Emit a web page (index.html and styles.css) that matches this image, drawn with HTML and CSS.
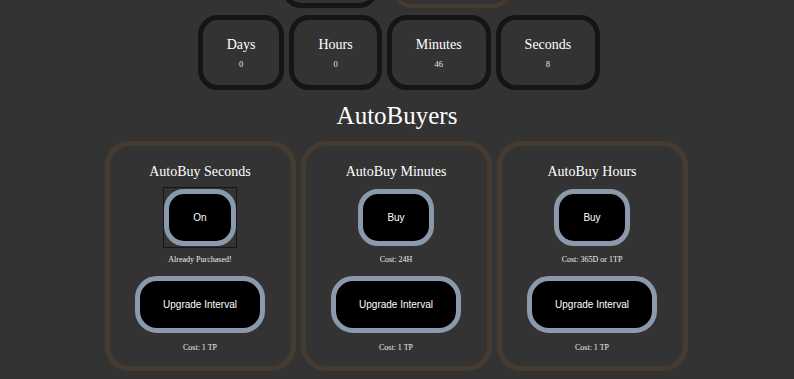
FILE: index.html
```html
<!DOCTYPE html>
<html lang="en">
<head>
    <meta charset="UTF-8">
    <meta name="viewport" content="width=device-width, initial-scale=1.0">
    <title>AutoBuyers</title>
    <link rel="stylesheet" href="styles.css">
</head>
<body>
    <div class="page">
        <!-- bottom of the section above, scrolled out of view -->
        <div class="prev-row">
            <div class="prev-box dark"></div>
            <div class="prev-box brown"></div>
        </div>

        <div class="timer-row">
            <div class="timer">
                <h3>Days</h3>
                <p>0</p>
            </div>
            <div class="timer">
                <h3>Hours</h3>
                <p>0</p>
            </div>
            <div class="timer">
                <h3>Minutes</h3>
                <p>46</p>
            </div>
            <div class="timer">
                <h3>Seconds</h3>
                <p>8</p>
            </div>
        </div>

        <h1>AutoBuyers</h1>

        <div class="cards">
            <div class="card">
                <h3>AutoBuy Seconds</h3>
                <button class="btn focused">On</button>
                <p class="note">Already Purchased!</p>
                <button class="btn up">Upgrade Interval</button>
                <p class="note">Cost: 1 TP</p>
            </div>
            <div class="card">
                <h3>AutoBuy Minutes</h3>
                <button class="btn">Buy</button>
                <p class="note">Cost: 24H</p>
                <button class="btn up">Upgrade Interval</button>
                <p class="note">Cost: 1 TP</p>
            </div>
            <div class="card">
                <h3>AutoBuy Hours</h3>
                <button class="btn">Buy</button>
                <p class="note">Cost: 365D or 1TP</p>
                <button class="btn up">Upgrade Interval</button>
                <p class="note">Cost: 1 TP</p>
            </div>
        </div>
    </div>
</body>
</html>
```

FILE: styles.css
```css
body {
    margin: 0;
    padding: 0;
    background-color: #333;
    color: #fff;
    font-family: "Liberation Serif", "Times New Roman", serif;
    overflow: hidden;
}

.page {
    display: flex;
    flex-direction: column;
    align-items: center;
}

/* leftovers of the section above */
.prev-row {
    display: flex;
    gap: 14px;
    margin-top: -30px;
}

.prev-box {
    height: 38px;
    box-sizing: border-box;
    border-radius: 20px;
}

.prev-box.dark {
    width: 96px;
    border: 5px solid #151515;
}

.prev-box.brown {
    width: 120px;
    border: 4px solid #463b31;
}

/* timer */
.timer-row {
    display: flex;
    gap: 5px;
    margin: 7px 0 0 4px;
}

.timer {
    border: 5px solid #151515;
    border-radius: 20px;
    padding: 16px 24px;
    text-align: center;
}

.timer h3 {
    margin: 0 0 7px;
    font-size: 14px;
    line-height: 17px;
    font-weight: normal;
}

.timer p {
    margin: 0;
    font-size: 8.5px;
    line-height: 9px;
    color: #e6e6e6;
}

h1 {
    margin: 11px 0 10px;
    font-size: 25px;
    line-height: 30px;
    font-weight: normal;
}

/* autobuyer cards */
.cards {
    display: flex;
    gap: 5px;
    margin-right: 2px;
}

.card {
    width: 191px;
    box-sizing: border-box;
    border: 5px solid #463b31;
    border-radius: 25px;
    padding: 17px 0 13px;
    display: flex;
    flex-direction: column;
    align-items: center;
}

.card h3 {
    margin: 0;
    font-size: 14px;
    line-height: 17px;
    font-weight: normal;
}

.btn {
    position: relative;
    margin-top: 9px;
    background-color: #000;
    color: #fff;
    border: 5px solid #8a9aab;
    border-radius: 20px;
    padding: 18px 24px;
    font-family: "Liberation Sans", Arial, sans-serif;
    font-size: 10px;
    line-height: 11px;
    cursor: pointer;
}

.btn.up {
    margin-top: 11px;
    padding: 18px 23px;
    border-radius: 22px;
}

/* square focus ring left on the clicked button */
.btn.focused::after {
    content: "";
    position: absolute;
    top: -7px;
    left: -6px;
    right: -6px;
    bottom: -7px;
    border: 1px solid #161616;
}

.note {
    margin: 9px 0 0;
    font-size: 8px;
    line-height: 10px;
    color: #f0ece6;
}

.btn.up + .note {
    margin-top: 10px;
}
```
